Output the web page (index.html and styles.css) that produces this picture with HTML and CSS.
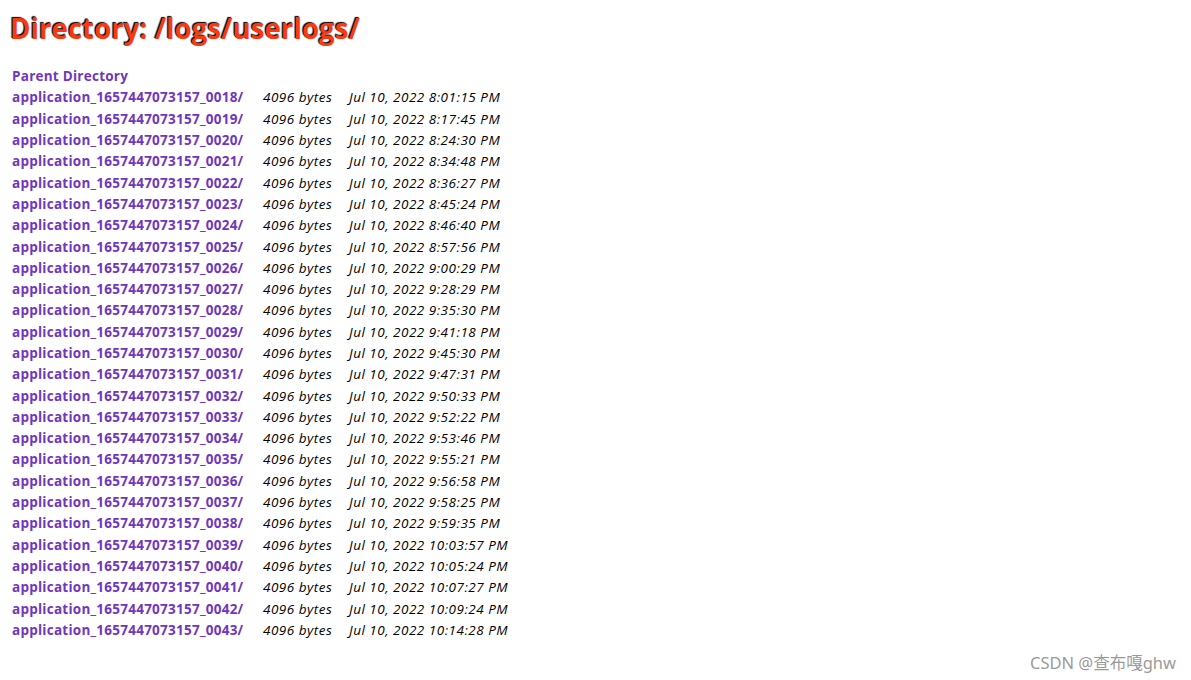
FILE: index.html
```html
<!DOCTYPE html>
<html>
<head>
<meta charset="utf-8">
<title>Directory: /logs/userlogs/</title>
<link rel="stylesheet" href="styles.css">
</head>
<body>
<h1 class="title">Directory: /logs/userlogs/</h1>
<table class="listing">
<tbody>
<tr><td class="name"><a href="#">Parent Directory</a></td><td class="size"></td><td class="date"></td></tr>
<tr><td class="name"><a href="#">application_1657447073157_0018/</a></td><td class="size">4096 bytes</td><td class="date">Jul 10, 2022 8:01:15 PM</td></tr>
<tr><td class="name"><a href="#">application_1657447073157_0019/</a></td><td class="size">4096 bytes</td><td class="date">Jul 10, 2022 8:17:45 PM</td></tr>
<tr><td class="name"><a href="#">application_1657447073157_0020/</a></td><td class="size">4096 bytes</td><td class="date">Jul 10, 2022 8:24:30 PM</td></tr>
<tr><td class="name"><a href="#">application_1657447073157_0021/</a></td><td class="size">4096 bytes</td><td class="date">Jul 10, 2022 8:34:48 PM</td></tr>
<tr><td class="name"><a href="#">application_1657447073157_0022/</a></td><td class="size">4096 bytes</td><td class="date">Jul 10, 2022 8:36:27 PM</td></tr>
<tr><td class="name"><a href="#">application_1657447073157_0023/</a></td><td class="size">4096 bytes</td><td class="date">Jul 10, 2022 8:45:24 PM</td></tr>
<tr><td class="name"><a href="#">application_1657447073157_0024/</a></td><td class="size">4096 bytes</td><td class="date">Jul 10, 2022 8:46:40 PM</td></tr>
<tr><td class="name"><a href="#">application_1657447073157_0025/</a></td><td class="size">4096 bytes</td><td class="date">Jul 10, 2022 8:57:56 PM</td></tr>
<tr><td class="name"><a href="#">application_1657447073157_0026/</a></td><td class="size">4096 bytes</td><td class="date">Jul 10, 2022 9:00:29 PM</td></tr>
<tr><td class="name"><a href="#">application_1657447073157_0027/</a></td><td class="size">4096 bytes</td><td class="date">Jul 10, 2022 9:28:29 PM</td></tr>
<tr><td class="name"><a href="#">application_1657447073157_0028/</a></td><td class="size">4096 bytes</td><td class="date">Jul 10, 2022 9:35:30 PM</td></tr>
<tr><td class="name"><a href="#">application_1657447073157_0029/</a></td><td class="size">4096 bytes</td><td class="date">Jul 10, 2022 9:41:18 PM</td></tr>
<tr><td class="name"><a href="#">application_1657447073157_0030/</a></td><td class="size">4096 bytes</td><td class="date">Jul 10, 2022 9:45:30 PM</td></tr>
<tr><td class="name"><a href="#">application_1657447073157_0031/</a></td><td class="size">4096 bytes</td><td class="date">Jul 10, 2022 9:47:31 PM</td></tr>
<tr><td class="name"><a href="#">application_1657447073157_0032/</a></td><td class="size">4096 bytes</td><td class="date">Jul 10, 2022 9:50:33 PM</td></tr>
<tr><td class="name"><a href="#">application_1657447073157_0033/</a></td><td class="size">4096 bytes</td><td class="date">Jul 10, 2022 9:52:22 PM</td></tr>
<tr><td class="name"><a href="#">application_1657447073157_0034/</a></td><td class="size">4096 bytes</td><td class="date">Jul 10, 2022 9:53:46 PM</td></tr>
<tr><td class="name"><a href="#">application_1657447073157_0035/</a></td><td class="size">4096 bytes</td><td class="date">Jul 10, 2022 9:55:21 PM</td></tr>
<tr><td class="name"><a href="#">application_1657447073157_0036/</a></td><td class="size">4096 bytes</td><td class="date">Jul 10, 2022 9:56:58 PM</td></tr>
<tr><td class="name"><a href="#">application_1657447073157_0037/</a></td><td class="size">4096 bytes</td><td class="date">Jul 10, 2022 9:58:25 PM</td></tr>
<tr><td class="name"><a href="#">application_1657447073157_0038/</a></td><td class="size">4096 bytes</td><td class="date">Jul 10, 2022 9:59:35 PM</td></tr>
<tr><td class="name"><a href="#">application_1657447073157_0039/</a></td><td class="size">4096 bytes</td><td class="date">Jul 10, 2022 10:03:57 PM</td></tr>
<tr><td class="name"><a href="#">application_1657447073157_0040/</a></td><td class="size">4096 bytes</td><td class="date">Jul 10, 2022 10:05:24 PM</td></tr>
<tr><td class="name"><a href="#">application_1657447073157_0041/</a></td><td class="size">4096 bytes</td><td class="date">Jul 10, 2022 10:07:27 PM</td></tr>
<tr><td class="name"><a href="#">application_1657447073157_0042/</a></td><td class="size">4096 bytes</td><td class="date">Jul 10, 2022 10:09:24 PM</td></tr>
<tr><td class="name"><a href="#">application_1657447073157_0043/</a></td><td class="size">4096 bytes</td><td class="date">Jul 10, 2022 10:14:28 PM</td></tr>
</tbody>
</table>
<div class="watermark">CSDN @查布嘎ghw</div>
</body>
</html>
```
FILE: styles.css
```css
html, body {
  margin: 0;
  padding: 0;
  background: #ffffff;
}
body {
  padding: 10px 10px 0 10px;
  font-family: "Open Sans", "Noto Sans", sans-serif;
  color: #000;
  position: relative;
  height: 670px;
}
.title {
  margin: 0;
  font-size: 27.7px;
  line-height: 36px;
  font-weight: bold;
  color: #fc390e;
  text-shadow: -1px -1px 1px #000000;
}
.listing {
  border-collapse: collapse;
  margin-top: 20px;
  font-size: 13.5px;
  letter-spacing: 0.5px;
}
.listing td {
  padding: 0 2px;
  height: 21.3px;
  line-height: 17px;
  font-style: italic;
  white-space: nowrap;
  vertical-align: middle;
}
.listing td.name {
  width: 247px;
}
.listing td.size {
  width: 82px;
}
.listing a {
  color: #7036be;
  font-weight: bold;
  font-style: normal;
  text-decoration: none;
  letter-spacing: 0.25px;
}
.watermark {
  position: absolute;
  right: 15px;
  top: 650px;
  font-family: "Noto Sans", "Noto Sans CJK SC", sans-serif;
  font-size: 16.5px;
  color: #9a9a9a;
}
```
